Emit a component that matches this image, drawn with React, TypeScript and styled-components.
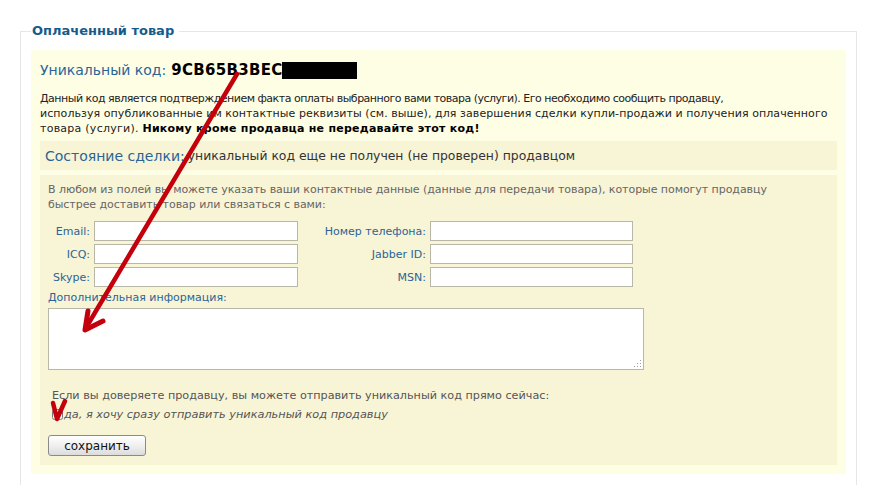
import React from 'react';
import styled, { createGlobalStyle } from 'styled-components';

const GlobalStyle = createGlobalStyle`
  html, body {
    margin: 0;
    padding: 0;
    background: #ffffff;
  }
  body {
    font-family: "DejaVu Sans", Verdana, sans-serif;
    font-size: 11px;
    color: #222;
  }
`;

const Page = styled.div`
  position: relative;
  width: 877px;
  height: 498px;
  box-sizing: border-box;
  padding: 24px 0 0 20px;
`;

const Fieldset = styled.fieldset`
  margin: 0;
  width: 837px;
  height: 461px;
  box-sizing: border-box;
  padding: 12px 10px 0 10px;
  border: 1px solid #e6e6e6;
  border-bottom: none;
`;

const Legend = styled.legend`
  margin-left: 0;
  padding: 0 5px 0 1px;
  font-size: 13px;
  font-weight: bold;
  color: #175b8c;
  line-height: 14px;
`;

const OuterBox = styled.div`
  background: #fefee5;
  padding: 10px 9px 9px 9px;
`;

const CodeLine = styled.div`
  display: flex;
  align-items: center;
  height: 20px;
`;

const CodeLabel = styled.span`
  font-size: 14px;
  color: #2a6496;
  margin-right: 5px;
`;

const CodeValue = styled.span`
  font-size: 15px;
  font-weight: bold;
  color: #000;
  letter-spacing: 0.3px;
`;

const Redacted = styled.span`
  display: inline-block;
  width: 75px;
  height: 17px;
  background: #000;
  margin-left: -1px;
`;

const Paragraph = styled.p`
  margin: 11px 0 0 0;
  line-height: 15px;
  color: #222;
  b {
    color: #000;
  }
`;

const Line = styled.span<{ $spacing: number }>`
  letter-spacing: ${(p) => p.$spacing}px;
`;

const StatusBox = styled.div`
  margin-top: 5px;
  height: 29px;
  background: #f8f4d6;
  display: flex;
  align-items: center;
  padding-left: 5px;
  font-size: 12.4px;
  color: #333;
`;

const StatusLabel = styled.span`
  font-size: 14px;
  color: #2a6496;
  margin-right: 3px;
`;

const FormBox = styled.div`
  margin-top: 5px;
  background: #f8f4d6;
  padding: 7px 8px 9px 8px;
`;

const Intro = styled.p`
  margin: 0;
  line-height: 15px;
  color: #666;
  letter-spacing: -0.05px;
`;

const FieldGrid = styled.div`
  margin-top: 9px;
  display: grid;
  grid-template-columns: 42px 204px 124px 203px;
  grid-auto-rows: 20px;
  column-gap: 4px;
  row-gap: 3px;
  align-items: center;
`;

const FieldLabel = styled.label`
  text-align: right;
  color: #2a6496;
  white-space: nowrap;
`;

const TextInput = styled.input`
  box-sizing: border-box;
  width: 100%;
  height: 20px;
  margin: 0;
  border: 1px solid #b9b8a8;
  background: #fff;
`;

const ExtraLabel = styled.div`
  margin-top: 3px;
  color: #2a6496;
  line-height: 15px;
`;

const TextArea = styled.textarea`
  display: block;
  box-sizing: border-box;
  margin-top: 3px;
  width: 596px;
  height: 62px;
  border: 1px solid #b9b8a8;
  background: #fff;
  resize: none;
`;

const TrustText = styled.div`
  margin-top: 18px;
  padding-left: 4px;
  line-height: 15px;
  font-size: 11.2px;
  color: #555;
`;

const CheckRow = styled.label`
  display: flex;
  align-items: center;
  margin-top: 4px;
  padding-left: 4px;
  height: 15px;
  font-style: italic;
  font-size: 11.3px;
  color: #555;
`;

const CheckBox = styled.input`
  width: 11px;
  height: 11px;
  margin: 0 1px 0 0;
`;

const SaveButton = styled.button`
  margin-top: 13px;
  width: 98px;
  height: 21px;
  padding: 0;
  font-family: "DejaVu Sans", Verdana, sans-serif;
  font-size: 12px;
  color: #111;
  border: 1px solid #8a8a8a;
  border-radius: 3px;
  background: linear-gradient(#ffffff, #f0f0f0 50%, #dcdcdc);
`;

const Overlay = styled.svg`
  position: absolute;
  top: 0;
  left: 0;
  pointer-events: none;
`;

export default function App() {
  return (
    <Page>
      <GlobalStyle />
      <Fieldset>
        <Legend>Оплаченный товар</Legend>
        <OuterBox>
          <CodeLine>
            <CodeLabel>Уникальный код:</CodeLabel>
            <CodeValue>9CB65B3BEC</CodeValue>
            <Redacted />
          </CodeLine>
          <Paragraph>
            <Line $spacing={-0.5}>
              Данный код является подтверждением факта оплаты выбранного вами товара (услуги). Его необходимо сообщить продавцу,
            </Line>
            <br />
            <Line $spacing={0.07}>
              используя опубликованные им контактные реквизиты (см. выше), для завершения сделки купли-продажи и получения оплаченного
            </Line>
            <br />
            <Line $spacing={0.25}>
              товара (услуги). <b>Никому кроме продавца не передавайте этот код!</b>
            </Line>
          </Paragraph>
          <StatusBox>
            <StatusLabel>Состояние сделки:</StatusLabel>
            уникальный код еще не получен (не проверен) продавцом
          </StatusBox>
          <FormBox>
            <Intro>
              В любом из полей вы можете указать ваши контактные данные (данные для передачи товара), которые помогут продавцу
              <br />
              быстрее доставить товар или связаться с вами:
            </Intro>
            <FieldGrid>
              <FieldLabel>Email:</FieldLabel>
              <TextInput />
              <FieldLabel>Номер телефона:</FieldLabel>
              <TextInput />
              <FieldLabel>ICQ:</FieldLabel>
              <TextInput />
              <FieldLabel>Jabber ID:</FieldLabel>
              <TextInput />
              <FieldLabel>Skype:</FieldLabel>
              <TextInput />
              <FieldLabel>MSN:</FieldLabel>
              <TextInput />
            </FieldGrid>
            <ExtraLabel>Дополнительная информация:</ExtraLabel>
            <TextArea />
            <TrustText>Если вы доверяете продавцу, вы можете отправить уникальный код прямо сейчас:</TrustText>
            <CheckRow>
              <CheckBox type="checkbox" />
              да, я хочу сразу отправить уникальный код продавцу
            </CheckRow>
            <SaveButton>сохранить</SaveButton>
          </FormBox>
        </OuterBox>
      </Fieldset>
      <Overlay width="877" height="498" viewBox="0 0 877 498">
        <g stroke="#c4000c" strokeLinecap="round" strokeLinejoin="round" fill="none">
          <path d="M237 74 L87 326" strokeWidth="4.5" />
          <path d="M88 311 L85 330 L103 321" strokeWidth="5" />
          <path d="M53 403 L57 419 L65 401" strokeWidth="4.5" />
        </g>
        <g fill="#a0a0a0" stroke="none">
          <rect x="640" y="366" width="1" height="1" />
          <rect x="640" y="363" width="1" height="1" />
          <rect x="637" y="366" width="1" height="1" />
          <rect x="640" y="360" width="1" height="1" />
          <rect x="637" y="363" width="1" height="1" />
          <rect x="634" y="366" width="1" height="1" />
        </g>
      </Overlay>
    </Page>
  );
}
